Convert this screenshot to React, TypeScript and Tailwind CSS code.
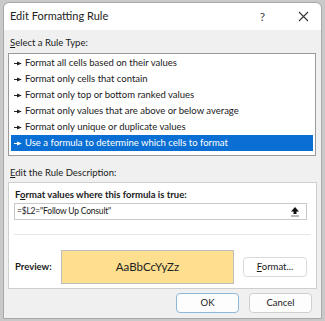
const RULES = [
  "Format all cells based on their values",
  "Format only cells that contain",
  "Format only top or bottom ranked values",
  "Format only values that are above or below average",
  "Format only unique or duplicate values",
  "Use a formula to determine which cells to format",
];

function Arrow({ light }: { light?: boolean }) {
  return (
    <svg width="8" height="5" viewBox="0 0 8 5" className="shrink-0">
      <path d="M0 2.5h4" stroke={light ? "#fff" : "#222"} strokeWidth="1" />
      <path d="M3 0.6L7.8 2.5L3 4.4Z" fill={light ? "#fff" : "#222"} />
    </svg>
  );
}

function UploadIcon() {
  return (
    <svg width="10" height="11" viewBox="0 0 10 11">
      <path d="M5 1L9 5.5H6.5V8H3.5V5.5H1Z" fill="#111" />
      <path d="M1 10h8" stroke="#777" strokeWidth="1" />
    </svg>
  );
}

export default function App() {
  return (
    <div
      className="w-[325px] h-[321px] bg-[#c9c9c9] pt-[2px] pl-[3px] pr-[3px] text-[9.5px] text-[#1a1a1a]"
      style={{ fontFamily: 'Lato, "Open Sans", sans-serif' }}
    >
      <div className="h-[317px] bg-[#f0f0f0] border border-[#a8a8a8] rounded-t-[6px] flex flex-col">
        {/* title bar */}
        <div className="h-[27px] bg-white rounded-t-[6px] flex items-center pl-[6px] pr-[12px] text-[11px] text-[#222]">
          <span>Edit Formatting Rule</span>
          <span className="ml-auto mr-[33px] text-[12px] text-[#444]">?</span>
          <svg width="11" height="11" viewBox="0 0 11 11">
            <path d="M1 1L10 10M10 1L1 10" stroke="#333" strokeWidth="1.1" />
          </svg>
        </div>

        <div className="px-[4px] pt-[5px] flex flex-col">
          <div className="pl-[2px] h-[16px] leading-[16px]">
            <span className="underline">S</span>elect a Rule Type:
          </div>
          <div className="mt-[2px] mr-[1px] bg-white border border-[#9a9a9a] px-[2px] pt-[1px] pb-[4px] flex flex-col">
            {RULES.map((r, i) => {
              const sel = i === RULES.length - 1;
              return (
                <div
                  key={r}
                  className={
                    "h-[16px] flex items-center gap-[3px] pl-[3px] " +
                    (sel ? "bg-[#0a6fd4] text-white" : "")
                  }
                >
                  <Arrow light={sel} />
                  <span className="leading-[16px] whitespace-nowrap">{r}</span>
                </div>
              );
            })}
          </div>

          <div className="pl-[2px] mt-[9px] h-[16px] leading-[16px]">
            <span className="underline">E</span>dit the Rule Description:
          </div>
          <div className="mt-[1px] bg-white border border-[#cfcfcf] flex flex-col px-[5px] pb-[4px]">
            <div className="mt-[4px] h-[16px] leading-[16px] pl-[1px] font-bold">
              F<span className="underline">o</span>rmat values where this formula is true:
            </div>
            <div className="mr-[4px] h-[17px] border border-[#c8c8c8] flex items-center pl-[2px] pr-[6px]">
              <span className="whitespace-nowrap text-[8.5px] tracking-[-0.2px]">=$L2="Follow Up Consult"</span>
              <span className="ml-auto flex">
                <UploadIcon />
              </span>
            </div>
            <div className="mt-[14px] border-t border-[#e6e6e6]" />
            <div className="mt-[15px] flex items-center">
              <span className="font-bold w-[47px] pl-[1px]">Preview:</span>
              <div className="w-[173px] h-[34px] bg-[#fddf8f] border border-[#bdbdbd] flex items-center justify-center text-[11.5px] text-[#222]">
                AaBbCcYyZz
              </div>
              <button className="ml-[9px] w-[64px] h-[20px] bg-white border border-[#dadada] rounded-[4px] text-[9.5px]">
                <span className="underline">F</span>ormat...
              </button>
            </div>
          </div>

          <div className="mt-[4px] flex justify-end gap-[10px] pr-[5px]">
            <button className="w-[63px] h-[20px] bg-[#fdfdfd] border border-[#8fb8d8] rounded-[4px] text-[9.5px]">
              OK
            </button>
            <button className="w-[63px] h-[20px] bg-[#fdfdfd] border border-[#d0d0d0] rounded-[4px] text-[9.5px]">
              Cancel
            </button>
          </div>
        </div>
      </div>
    </div>
  );
}
